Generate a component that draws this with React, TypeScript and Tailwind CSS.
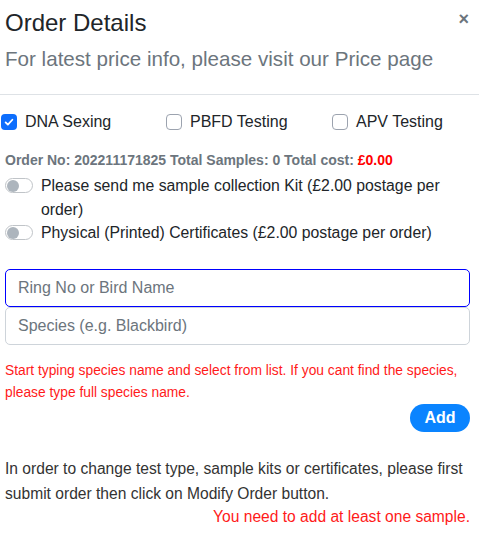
import React from "react";

function Check({ checked }: { checked?: boolean }) {
  return checked ? (
    <span className="flex h-4 w-4 shrink-0 items-center justify-center rounded-[4px] bg-[#0d6efd]">
      <svg viewBox="0 0 16 16" className="h-3 w-3" fill="none" stroke="white" strokeWidth="2.4" strokeLinecap="round" strokeLinejoin="round">
        <path d="M3.5 8.5l3 3 6-6.5" />
      </svg>
    </span>
  ) : (
    <span className="block h-4 w-4 shrink-0 rounded-[4px] border border-[#9ca3af] bg-white" />
  );
}

function Toggle() {
  return (
    <span className="mt-[4px] flex h-[15px] w-[28px] shrink-0 items-center rounded-full border border-[#c0c4c8] bg-white px-[1px]">
      <span className="block h-[12px] w-[12px] rounded-full bg-[#adb5bd]" />
    </span>
  );
}

export default function App() {
  return (
    <div className="w-[479px] h-[533px] overflow-hidden bg-white text-[#212529]" style={{ fontFamily: '"Liberation Sans", Arial, sans-serif' }}>
      <div className="flex items-start justify-between pl-[5px] pr-[10px] pt-[8px]">
        <div>
          <h1 className="text-[24px] leading-[29px] text-[#212529]">Order Details</h1>
          <p className="mt-[10px] text-[20.6px] leading-[24px] text-[#6c757d]">For latest price info, please visit our Price page</p>
        </div>
        <span className="mt-[2px] text-[18px] leading-none font-bold text-[#6c757d]">×</span>
      </div>
      <div className="mt-[23px] border-t border-[#dee2e6]" />
      <div className="pl-[5px] pr-[9px]">
        <div className="mt-[17px] flex items-center text-[16px] leading-[20px]">
          <label className="flex w-[165px] -ml-[4px] items-center gap-[8px]"><Check checked /> DNA Sexing</label>
          <label className="flex w-[166px] items-center gap-[8px]"><Check /> PBFD Testing</label>
          <label className="flex items-center gap-[8px]"><Check /> APV Testing</label>
        </div>
        <div className="mt-[20px] text-[14px] leading-[16px] font-bold text-[#6c757d]">
          Order No: 202211171825 Total Samples: 0 Total cost: <span className="text-[#ff0000]">£0.00</span>
        </div>
        <div className="mt-[6px] flex gap-[8px] text-[15.8px] leading-[23.5px]">
          <Toggle />
          <span>Please send me sample collection Kit (£2.00 postage per order)</span>
        </div>
        <div className="flex gap-[8px] text-[15.8px] leading-[23.5px]">
          <Toggle />
          <span>Physical (Printed) Certificates (£2.00 postage per order)</span>
        </div>
        <div className="mt-[24px] flex h-[38px] items-center rounded-[5px] border border-[#0000ff] px-[12px] text-[16px] text-[#6c757d]">Ring No or Bird Name</div>
        <div className="mt-0 flex h-[38px] items-center rounded-[5px] border border-[#ced4da] px-[12px] text-[16px] text-[#6c757d]">Species (e.g. Blackbird)</div>
        <p className="mt-[15px] text-[13.8px] leading-[22px] text-[#ff1a1a]">Start typing species name and select from list. If you cant find the species, please type full species name.</p>
        <div className="mt-[0px] flex justify-end">
          <button className="h-[28px] w-[60px] rounded-full bg-[#0a84ff] text-[16px] font-bold text-white">Add</button>
        </div>
        <p className="mt-[24px] text-[15.6px] leading-[25px] text-[#333]">In order to change test type, sample kits or certificates, please first submit order then click on Modify Order button.</p>
        <p className="text-right text-[15.6px] leading-[22px] text-[#ff1a1a]">You need to add at least one sample.</p>
      </div>
    </div>
  );
}
